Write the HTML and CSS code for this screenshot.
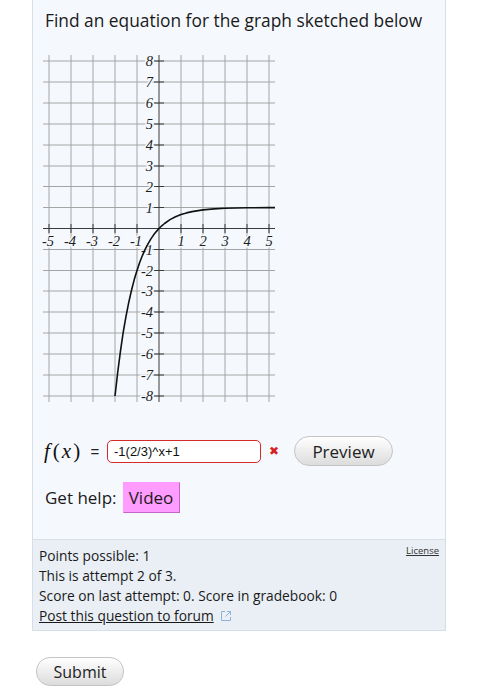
FILE: index.html
```html
<!DOCTYPE html>
<html>
<head>
<meta charset="utf-8">
<link rel="stylesheet" href="styles.css">
</head>
<body>
<div class="question">
  <div class="qbody">
    <p class="prompt">Find an equation for the graph sketched below</p>
    <svg class="graph" width="240" height="356" viewBox="40 50 240 356" xmlns="http://www.w3.org/2000/svg">
      <g class="grid">
        <line x1="50" y1="55" x2="50" y2="402"/>
        <line x1="72" y1="55" x2="72" y2="402"/>
        <line x1="94" y1="55" x2="94" y2="402"/>
        <line x1="116" y1="55" x2="116" y2="402"/>
        <line x1="138" y1="55" x2="138" y2="402"/>
        <line x1="182" y1="55" x2="182" y2="402"/>
        <line x1="204" y1="55" x2="204" y2="402"/>
        <line x1="226" y1="55" x2="226" y2="402"/>
        <line x1="248" y1="55" x2="248" y2="402"/>
        <line x1="270" y1="55" x2="270" y2="402"/>
        <line x1="44" y1="61" x2="276" y2="61"/>
        <line x1="44" y1="82" x2="276" y2="82"/>
        <line x1="44" y1="103" x2="276" y2="103"/>
        <line x1="44" y1="124" x2="276" y2="124"/>
        <line x1="44" y1="145" x2="276" y2="145"/>
        <line x1="44" y1="166" x2="276" y2="166"/>
        <line x1="44" y1="186.5" x2="276" y2="186.5"/>
        <line x1="44" y1="207.5" x2="276" y2="207.5"/>
        <line x1="44" y1="249.5" x2="276" y2="249.5"/>
        <line x1="44" y1="270.5" x2="276" y2="270.5"/>
        <line x1="44" y1="291" x2="276" y2="291"/>
        <line x1="44" y1="312" x2="276" y2="312"/>
        <line x1="44" y1="333" x2="276" y2="333"/>
        <line x1="44" y1="354" x2="276" y2="354"/>
        <line x1="44" y1="375" x2="276" y2="375"/>
        <line x1="44" y1="396" x2="276" y2="396"/>
      </g>
      <g class="axis">
        <line x1="160" y1="55" x2="160" y2="402"/>
        <line x1="44" y1="228.5" x2="276" y2="228.5"/>
        <path d="M155 61H165M155 82H165M155 103H165M155 124H165M155 145H165M155 166H165M155 186.5H165M155 207.5H165M155 249.5H165M155 270.5H165M155 291H165M155 312H165M155 333H165M155 354H165M155 375H165M155 396H165"/>
        <path d="M50 224V233M72 224V233M94 224V233M116 224V233M138 224V233M182 224V233M204 224V233M226 224V233M248 224V233M270 224V233"/>
      </g>
      <g class="ylabels">
        <text x="154" y="61">8</text>
        <text x="154" y="82">7</text>
        <text x="154" y="103">6</text>
        <text x="154" y="124">5</text>
        <text x="154" y="145">4</text>
        <text x="154" y="166">3</text>
        <text x="154" y="186.5">2</text>
        <text x="154" y="207.5">1</text>
        <text x="154" y="249.5">-1</text>
        <text x="154" y="270.5">-2</text>
        <text x="154" y="291">-3</text>
        <text x="154" y="312">-4</text>
        <text x="154" y="333">-5</text>
        <text x="154" y="354">-6</text>
        <text x="154" y="375">-7</text>
        <text x="154" y="396">-8</text>
      </g>
      <g class="xlabels">
        <text x="49" y="241">-5</text>
        <text x="71" y="241">-4</text>
        <text x="93" y="241">-3</text>
        <text x="115" y="241">-2</text>
        <text x="137" y="241">-1</text>
        <text x="182" y="241">1</text>
        <text x="204" y="241">2</text>
        <text x="226" y="241">3</text>
        <text x="248" y="241">4</text>
        <text x="270" y="241">5</text>
      </g>
      <polyline class="curve" points="116,396 118.75,372 121.5,350.8 124.25,332 127,316.4 129.75,302.4 132.5,290.2 135.25,279.6 138,270.4 140.75,262.3 143.5,255.3 146.25,249.2 149,243.8 151.75,239.1 154.5,235.1 157.25,231.6 160,228.5 162.75,225.8 165.5,223.5 171,219.6 176.5,216.8 182,214.5 187.5,212.9 193,211.6 204,209.9 215,208.9 226,208.3 248,207.8 270,207.6 276,207.6"/>
    </svg>
    <div class="answer-row">
      <span class="math"><i class="mf">f</i><span class="mp">(</span><i class="mx">x</i><span class="mp">)</span></span>
      <span class="eq">=</span>
      <input class="answer" type="text" value="-1(2/3)^x+1">
      <span class="wrong">✖</span>
      <button class="btn preview">Preview</button>
    </div>
    <div class="help-row">
      <span class="help-label">Get help:</span>
      <span class="video">Video</span>
    </div>
  </div>
  <div class="qinfo">
    <a class="license" href="#">License</a>
    <div>Points possible: 1</div>
    <div>This is attempt 2 of 3.</div>
    <div>Score on last attempt: 0. Score in gradebook: 0</div>
    <div><a class="forum" href="#">Post this question to forum</a>
      <svg class="ext" width="12" height="12" viewBox="0 0 12 12" xmlns="http://www.w3.org/2000/svg">
        <path d="M5 1.5H1.5V10.5H10.5V7" fill="none" stroke="#8fb4dc" stroke-width="1"/>
        <path d="M7 1.5H10.5V5M10.5 1.5L5.5 6.5" fill="none" stroke="#8fb4dc" stroke-width="1"/>
      </svg>
    </div>
  </div>
</div>
<div class="submit-wrap">
  <button class="btn submit">Submit</button>
</div>
</body>
</html>
```

FILE: styles.css
```css
html, body {
  margin: 0;
  padding: 0;
  background: #ffffff;
}

body {
  font-family: "Open Sans", "Liberation Sans", sans-serif;
  color: #222;
}

.question {
  margin-left: 32px;
  width: 412px;
  border: 1px solid #d6dee7;
  border-top: none;
  background: #f5f9fd;
}

.qbody {
  padding: 8px 0 26px 0;
}

.prompt {
  margin: 0;
  padding-left: 12px;
  font-size: 17.35px;
  line-height: 24px;
  color: #1a1a1a;
}

.graph {
  display: block;
  margin: 18px 0 0 6px;
}

.grid line {
  stroke: #a4a4a4;
  stroke-width: 1;
}

.axis line,
.axis path {
  stroke: #3a3a3a;
  stroke-width: 1;
  fill: none;
}

.ylabels text,
.xlabels text {
  font-family: "Liberation Serif", "Times New Roman", serif;
  font-style: italic;
  font-size: 14.5px;
  fill: #1e1e1e;
  dominant-baseline: central;
  stroke: #f5f9fd;
  stroke-width: 3px;
  paint-order: stroke;
}

.ylabels text {
  text-anchor: end;
}

.xlabels text {
  text-anchor: middle;
}

.curve {
  fill: none;
  stroke: #111;
  stroke-width: 1.6;
  stroke-linejoin: round;
}

.answer-row {
  display: flex;
  align-items: center;
  height: 30px;
  margin-top: 30px;
  padding-left: 9px;
}

.math {
  width: 41px;
  display: flex;
  align-items: baseline;
  font-family: "Liberation Serif", "Times New Roman", serif;
  font-size: 21px;
  color: #111;
}

.mf {
  margin-left: 2px;
  margin-right: 3px;
}

.mp {
  font-style: normal;
}

.mx {
  margin: 0 2px 0 2px;
}

.eq {
  width: 24px;
  text-align: center;
  font-family: "Liberation Sans", Arial, sans-serif;
  font-size: 15px;
  color: #222;
}

.answer {
  box-sizing: border-box;
  width: 154px;
  height: 23px;
  margin: 0;
  padding: 0 6px;
  border: 1px solid #d42a2a;
  border-radius: 5px;
  background: #fff;
  font-family: "Liberation Sans", Arial, sans-serif;
  font-size: 13px;
  color: #111;
}

.wrong {
  margin-left: 8px;
  width: 25px;
  font-family: "DejaVu Sans", sans-serif;
  font-size: 12px;
  color: #d42222;
}

.btn {
  box-sizing: border-box;
  border: 1px solid #c4c4c4;
  background: linear-gradient(#ffffff, #dcdcdc);
  font-family: "Open Sans", "Liberation Sans", sans-serif;
  color: #222;
  padding: 0;
}

.preview {
  width: 99px;
  height: 30px;
  border-radius: 15px;
  font-size: 17px;
}

.help-row {
  display: flex;
  align-items: center;
  margin-top: 16px;
  height: 31px;
  padding-left: 12px;
}

.help-label {
  font-size: 17px;
  color: #1a1a1a;
  margin-right: 6px;
}

.video {
  box-sizing: border-box;
  height: 31px;
  width: 57px;
  display: flex;
  align-items: center;
  justify-content: center;
  background: #ff9cff;
  border: 1px solid #ff9cff;
  border-right-color: #c466c4;
  border-bottom-color: #c466c4;
  font-size: 17px;
  color: #1a1a1a;
}

.qinfo {
  position: relative;
  border-top: 1px solid #d6dee7;
  background: #e9eff5;
  padding: 6px 0 4px 6px;
  font-size: 13.75px;
  line-height: 20px;
  color: #1a1a1a;
}

.license {
  position: absolute;
  right: 6px;
  top: 4px;
  font-size: 9.5px;
  line-height: 14px;
  color: #333;
}

.forum {
  color: #1a1a1a;
}

.ext {
  vertical-align: -1px;
  margin-left: 3px;
}

.submit-wrap {
  padding: 26px 0 0 36px;
}

.submit {
  width: 88px;
  height: 29px;
  border-radius: 14px;
  font-size: 16px;
}
```
